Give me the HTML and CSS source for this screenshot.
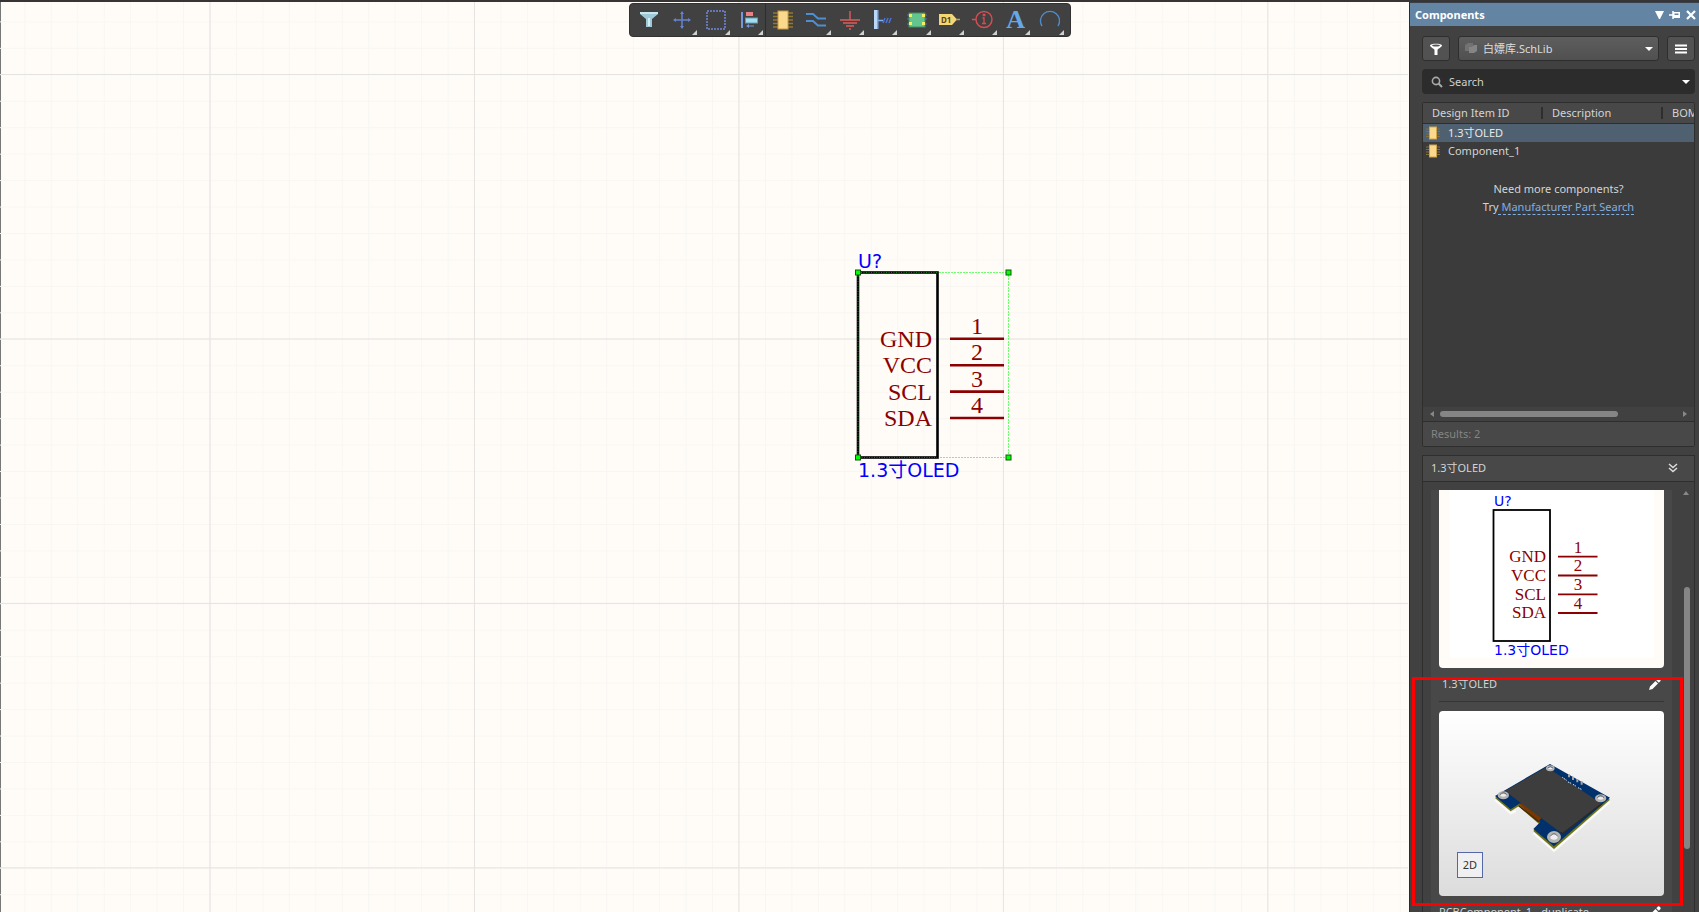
FILE: index.html
```html
<!DOCTYPE html>
<html lang="zh-CN">
<head>
  <meta charset="UTF-8">
  <meta name="viewport" content="width=device-width, initial-scale=1.0">
  <title>Components</title>
  <link rel="stylesheet" href="styles.css">
</head>
<body>
  <main class="canvas">
    <svg class="sheet">
      <defs>
        <pattern id="minor" x="209.5" y="74.3" width="26.45" height="26.45" patternUnits="userSpaceOnUse">
          <path d="M.5 0V26.45M0 .5H26.45" stroke="#f8f6f3" fill="none"/>
        </pattern>
        <pattern id="major" x="209.5" y="74" width="264.45" height="264.45" patternUnits="userSpaceOnUse">
          <path d="M.5 0V264.45M0 .5H264.45" stroke="#e3e3e1" fill="none"/>
        </pattern>
      </defs>
      <rect width="100%" height="100%" fill="url(#minor)"/>
      <rect width="100%" height="100%" fill="url(#major)"/>

      <g class="symbol">
        <text class="designator" x="858" y="268">U?</text>
        <rect x="858" y="272.5" width="79.5" height="185" fill="none" stroke="#000" stroke-width="2.6"/>
        <path d="M937 272.5H858V457.5H937" fill="none" stroke="#1c7a1c" stroke-dasharray="1 1.5"/>
        <path d="M939 272.5H1008.5V457.5H939" fill="none" stroke="#6cff6c" stroke-dasharray="2 1"/>
        <g class="pin-name">
          <text x="932" y="347">GND</text>
          <text x="932" y="373">VCC</text>
          <text x="932" y="400">SCL</text>
          <text x="932" y="426">SDA</text>
        </g>
        <g class="pin-number">
          <text x="977" y="334">1</text>
          <text x="977" y="360">2</text>
          <text x="977" y="387">3</text>
          <text x="977" y="413">4</text>
        </g>
        <path d="M950 338.7H1004M950 365.2H1004M950 391.6H1004M950 418H1004" stroke="#8b0000" stroke-width="2.6"/>
        <text class="designator" x="858" y="477">1.3寸OLED</text>
        <g fill="#0f0" stroke="#0a5a0a">
          <rect x="855.5" y="270" width="5" height="5"/>
          <rect x="1006" y="270" width="5" height="5"/>
          <rect x="855.5" y="455" width="5" height="5"/>
          <rect x="1006" y="455" width="5" height="5"/>
        </g>
      </g>
    </svg>
  </main>

  <nav class="toolbar" aria-label="Active Bar">
    <button aria-label="Filter"><svg viewBox="0 0 22 22"><path d="M2 3H20V5L14 10V18H8V10L2 5Z" fill="#9fc9d8"/><path d="M2 3H20V5H2Z" fill="#c9e6ee"/><path d="M10 9H12V17H10Z" fill="#d4eef5"/></svg></button>
    <button class="more" aria-label="Move"><svg viewBox="0 0 22 22"><path d="M11 3V19M3 11H19" stroke="#6482cf" stroke-width="1.5"/><path d="M11 2L13 5H9ZM11 20L13 17H9ZM2 11L5 9V13ZM20 11L17 9V13Z" fill="#6482cf"/></svg></button>
    <button class="more" aria-label="Select"><svg viewBox="0 0 22 22"><rect x="2" y="2" width="18" height="18" fill="none" stroke="#7088dc" stroke-width="1.5" stroke-dasharray="2 1"/></svg></button>
    <button class="more" aria-label="Align"><svg viewBox="0 0 22 22"><path d="M3 3H5V19H3Z" fill="#7397dc"/><rect x="8" y="3" width="7" height="4" fill="#e98086"/><rect x="7.500" y="9" width="12" height="5" fill="#a7dcec" stroke="#5d9eba"/><path d="M8 17L11 15V16.500H16V17.500H11V19Z" fill="#7397dc"/></svg></button>
    <button class="group" aria-label="Place part"><svg viewBox="0 0 22 22"><path d="M1 4H21M1 7.500H21M1 11H21M1 14.500H21M1 18H21" stroke="#93782c" stroke-width="1.4"/><rect x="6" y="2" width="10" height="18" fill="#fbd98c" stroke="#c89d45"/></svg></button>
    <button class="more" aria-label="Place wire"><svg viewBox="0 0 22 22"><path d="M1 5H8L13 9.500H21M1 12H8L13 16.500H21" fill="none" stroke="#4d8fd0" stroke-width="2"/></svg></button>
    <button class="more" aria-label="Place ground"><svg viewBox="0 0 22 22"><path d="M11 2V11M1 11H21M4 14H18M7 17H15M10 20H12" stroke="#de5b5b" stroke-width="1.4"/></svg></button>
    <button class="more" aria-label="Place harness"><svg viewBox="0 0 22 22"><rect x="2" y="1" width="4" height="19" fill="#b9d6fb"/><path d="M5 1H6.500V20H5Z" fill="#7da6e6"/><path d="M6 11.500H11" stroke="#80aeea" stroke-width="1.500"/><path d="M11 14L13 9M14 14L16 9M17 14L19 9" stroke="#4e72d8" stroke-width="1.500"/></svg></button>
    <button class="more" aria-label="Place sheet symbol"><svg viewBox="0 0 22 22"><path d="M2 6H22M2 10H22M2 15H22" stroke="#5d70bd"/><rect x="4" y="4" width="16" height="14" fill="#63c48d" stroke="#438e68"/><path d="M4 5H7V8H4ZM17 5H20V8H17ZM4 13H7V16H4ZM17 13H20V16H17Z" fill="#f3ef65"/></svg></button>
    <button class="more" aria-label="Place port"><svg viewBox="0 0 22 22"><path d="M1 5H14L19 10.500L14 16H1Z" fill="#f5d675"/><path d="M18 10.500H22" stroke="#c39c46" stroke-width="1.500"/><text class="port-name" x="3" y="14">D1</text></svg></button>
    <button class="more" aria-label="Place directive"><svg viewBox="0 0 22 22"><circle cx="13" cy="10.500" r="8" fill="none" stroke="#d84d52" stroke-width="1.400"/><path d="M1 10.500H5M11.500 9H13V14.500M11 14.500H15M12.300 5.500H13.800V6.500H12.300Z" fill="none" stroke="#d84d52" stroke-width="1.300"/></svg></button>
    <button class="more letter" aria-label="Place text">A</button>
    <button class="more" aria-label="Place arc"><svg viewBox="0 0 22 22"><path d="M4 17A9.500 9.500 0 1 1 20 17" fill="none" stroke="#5289c7" stroke-width="1.400"/></svg></button>
  </nav>

  <aside class="panel">
    <header class="title">
      <h1>Components</h1>
      <button aria-label="Panel menu"><svg viewBox="0 0 14 14"><path d="M3 3H12L8 11H7Z" fill="#fff"/></svg></button>
      <button aria-label="Pin panel"><svg viewBox="0 0 14 14"><path d="M1 7H5M5 3V11" stroke="#fff" stroke-width="1.500"/><path d="M5 4H12V10H5ZM6.500 5.500V7H10.500V5.500Z" fill="#fff" fill-rule="evenodd"/></svg></button>
      <button aria-label="Close panel"><svg viewBox="0 0 14 14"><path d="M3 3L11 11M11 3L3 11" stroke="#fff" stroke-width="2.200"/></svg></button>
    </header>

    <div class="content">
      <div class="library">
        <button class="square" aria-label="Filters"><svg viewBox="0 0 14 14"><path d="M1 3.500C1 1 13 1 13 3.500C13 5 8.500 7 8.500 8V13H5.500V8C5.500 7 1 5 1 3.500Z" fill="#fff"/><ellipse cx="7" cy="3.600" rx="3.800" ry="1" fill="#555"/></svg></button>
        <div class="picker">
          <svg class="book" viewBox="0 0 14 12"><path d="M1 3L4 1H9V7L7 9H1Z" fill="#727272"/><path d="M5 5H8L10 3H13V9L10 11H5Z" fill="#858585"/></svg>
          <select aria-label="Library"><option>白嫖库.SchLib</option></select>
          <i class="caret"></i>
        </div>
        <button class="square" aria-label="Operations"><svg viewBox="0 0 14 14"><path d="M1 3.500H13M1 7H13M1 10.500H13" stroke="#fff" stroke-width="2"/></svg></button>
      </div>

      <div class="search">
        <svg class="lens" viewBox="0 0 12 12"><circle cx="5" cy="5" r="3.600" fill="none" stroke="#a9a9a9" stroke-width="1.600"/><path d="M7.500 7.500L11 11" stroke="#a9a9a9" stroke-width="2"/></svg>
        <input type="text" placeholder="Search" aria-label="Search">
        <i class="caret"></i>
      </div>

      <section class="results">
        <div class="list">
          <table>
            <thead>
              <tr><th>Design Item ID</th><th>Description</th><th>BOM</th></tr>
            </thead>
            <tbody>
              <tr class="selected"><td><svg class="chip" viewBox="0 0 14 14"><path d="M0 3H14M0 5.500H14M0 8H14M0 10.500H14" stroke="#85713a"/><rect x="3.500" y="1" width="7" height="12" fill="#fbd98c" stroke="#cfa44e"/></svg>1.3寸OLED</td><td></td><td></td></tr>
              <tr><td><svg class="chip" viewBox="0 0 14 14"><path d="M0 3H14M0 5.500H14M0 8H14M0 10.500H14" stroke="#85713a"/><rect x="3.500" y="1" width="7" height="12" fill="#fbd98c" stroke="#cfa44e"/></svg>Component_1</td><td></td><td></td></tr>
            </tbody>
          </table>
          <p class="hint">Need more components?<br>Try<a href="#">&nbsp;Manufacturer Part Search</a></p>
        </div>
        <div class="hscroll">
          <svg viewBox="0 0 6 8"><path d="M5 1V7L1 4Z" fill="#888"/></svg>
          <div class="track"><div class="thumb"></div></div>
          <svg viewBox="0 0 6 8"><path d="M1 1V7L5 4Z" fill="#888"/></svg>
        </div>
        <footer>Results: 2</footer>
      </section>

      <section class="details">
        <header>
          <h2>1.3寸OLED</h2>
          <button aria-label="Collapse"><svg viewBox="0 0 10 10"><path d="M1 1L5 4.500L9 1M1 5L5 8.500L9 5" fill="none" stroke="#ddd" stroke-width="1.500"/></svg></button>
        </header>
        <div class="scroller">
          <div class="models">
            <div class="preview schematic">
              <svg viewBox="0 0 225 178">
                <rect x="10" width="205" height="168" fill="#fff"/>
                <text class="designator" x="55" y="16">U?</text>
                <rect x="54.500" y="20" width="56.500" height="131" fill="none" stroke="#000" stroke-width="1.800"/>
                <g class="pin-name">
                  <text x="107" y="72">GND</text>
                  <text x="107" y="91">VCC</text>
                  <text x="107" y="110">SCL</text>
                  <text x="107" y="128">SDA</text>
                </g>
                <g class="pin-number">
                  <text x="139" y="63">1</text>
                  <text x="139" y="81">2</text>
                  <text x="139" y="100">3</text>
                  <text x="139" y="119">4</text>
                </g>
                <path d="M119 66.700H158.500M119 85.500H158.500M119 104.300H158.500M119 123H158.500" stroke="#8b0000" stroke-width="1.800"/>
                <text class="designator" x="55" y="165">1.3寸OLED</text>
              </svg>
            </div>
            <div class="model-name">
              <span>1.3寸OLED</span>
              <button aria-label="Edit symbol"><svg viewBox="0 0 12 12"><path d="M0 12L1 8.500L6.500 3L9 5.500L3.500 11ZM7.300 2.200L9 .5Q10 0 11 1Q12 2 11.500 3L9.800 4.700Z" fill="#fff"/></svg></button>
            </div>
            <div class="preview footprint">
              <svg viewBox="0 0 225 185">
                <g transform="translate(41 40) scale(.3333)">
                  <path d="M45 146L92 187L108 180M160 246L222 300L390 152" fill="none" stroke="#fafafa" stroke-width="6"/>
                  <path d="M210 44L390 146L222 294L160 240L178 220L116 166L92 181L45 141Z" fill="#6f7216"/>
                  <path d="M210 39L390 140L222 286L160 234L180 214L118 158L92 175L45 135Z" fill="#00316c"/>
                  <path d="M116 158L128 155L184 200L176 212Z" fill="#793800"/>
                  <path d="M116 164L176 212" stroke="#4d2400" stroke-width="4"/>
                  <path d="M200 48L365 158L247 248L75 120Z" fill="#3d3d3d"/>
                  <path d="M365 158L247 248L242 243" fill="none" stroke="#292929" stroke-width="4"/>
                  <path d="M247 79L260 88M264 93L274 97M279 100L289 106M294 110L306 116" stroke="#dde4ee" stroke-width="3" stroke-dasharray="4 2"/>
                  <path d="M267 70V79M279 77V87M292 84V94M305 91V101" stroke="#a5a5a5" stroke-width="6"/>
                  <g fill="#eee" stroke="#b4b4b4">
                    <ellipse cx="211" cy="52" rx="10" ry="6" stroke-width="6"/>
                    <ellipse cx="70" cy="133" rx="13" ry="8" stroke-width="8"/>
                    <ellipse cx="362" cy="142" rx="13" ry="8" stroke-width="8"/>
                    <ellipse cx="222" cy="258" rx="16" ry="13" stroke-width="10"/>
                  </g>
                  <g fill="none" stroke="#666" stroke-width="3">
                    <path d="M203 51Q211 43 219 51"/>
                    <path d="M60 131Q70 119 80 131"/>
                    <path d="M352 140Q362 128 372 140"/>
                    <path d="M211 256Q222 240 233 256"/>
                  </g>
                </g>
              </svg>
              <button class="mode">2D</button>
            </div>
            <div class="model-name last">
              <span>PCBComponent_1 - duplicate</span>
              <button aria-label="Edit footprint"><svg viewBox="0 0 12 12"><path d="M0 12L1 8.500L6.500 3L9 5.500L3.500 11ZM7.300 2.200L9 .5Q10 0 11 1Q12 2 11.500 3L9.800 4.700Z" fill="#fff"/></svg></button>
            </div>
          </div>
          <div class="vscroll">
            <svg viewBox="0 0 8 6"><path d="M1 5H7L4 1Z" fill="#888"/></svg>
            <div class="thumb"></div>
          </div>
          <div class="highlight"></div>
        </div>
      </section>
    </div>
  </aside>
</body>
</html>
```

FILE: styles.css
```css
* {
  box-sizing: border-box;
}
body {
  margin: 0;
  height: 100vh;
  display: flex;
  position: relative;
  overflow: hidden;
  border-top: 2px solid #373435;
  background: #414141;
  color: #d4d4d4;
  font-family: "Noto Sans", "Noto Sans CJK SC", sans-serif;
  font-size: 11px;
  line-height: 18px;
}
button {
  padding: 0;
  border: none;
  background: none;
  color: inherit;
  font: inherit;
  cursor: pointer;
}
svg {
  display: block;
}

/* drawing sheet */
.canvas {
  flex: 1;
  min-width: 0;
  margin-top: -2px;
  border-left: 1px solid #777;
  background: #fffcf8;
}
.sheet {
  width: 100%;
  height: 100%;
  margin-left: -1px;
}
.designator {
  fill: #00f;
  font-family: "DejaVu Sans", "Noto Sans CJK SC", sans-serif;
  font-size: 19px;
}
.pin-name,
.pin-number {
  fill: #8b0000;
  font-family: "Liberation Serif", serif;
  font-size: 24px;
}
.pin-name {
  text-anchor: end;
}
.pin-number {
  text-anchor: middle;
}

/* active bar */
.toolbar {
  position: absolute;
  top: 1px;
  left: 50%;
  width: 442px;
  height: 34px;
  transform: translateX(-50%);
  display: flex;
  padding: 0 4px 0 3px;
  border: 1px solid #323232;
  border-radius: 4px;
  background: #414141;
}
.toolbar button {
  flex: 1;
  position: relative;
  display: flex;
  justify-content: center;
  align-items: center;
}
.toolbar svg {
  width: 22px;
  height: 22px;
}
.toolbar .more::after {
  content: "";
  position: absolute;
  right: 2px;
  bottom: 1px;
  border-left: 5px solid transparent;
  border-bottom: 5px solid #d0d0d0;
}
.toolbar .group {
  border-left: 1px solid #2d2d2d;
}
.port-name {
  fill: #5b4412;
  font: bold 8px "Noto Sans", sans-serif;
}
.toolbar .letter {
  color: #64a8e8;
  font: bold 26px "Liberation Serif", serif;
}

/* components panel */
.panel {
  width: 290px;
  display: flex;
  flex-direction: column;
  border-left: 1px solid #2b2b2b;
  background: #414141;
}
.title {
  display: flex;
  align-items: center;
  height: 24px;
  padding-left: 5px;
  border-top: 1px solid #37404a;
  background: #6384a3;
}
.title h1 {
  flex: 1;
  margin: 0;
  color: #fff;
  font-size: 11px;
}
.title button {
  width: 16px;
}
.title svg {
  width: 14px;
  margin: 0 auto;
}
.content {
  flex: 1;
  min-height: 0;
  display: flex;
  flex-direction: column;
  padding: 10px 4px 0 12px;
}
.library {
  display: flex;
  gap: 8px;
  margin-bottom: 8px;
}
.square {
  width: 28px;
  height: 25px;
  border: 1px solid #2e2e2e;
  border-radius: 3px;
  background: #525252;
}
.square svg {
  width: 14px;
  margin: 0 auto;
}
.picker {
  flex: 1;
  position: relative;
}
.picker select {
  width: 100%;
  height: 25px;
  padding: 0 22px 0 24px;
  appearance: none;
  border: 1px solid #2e2e2e;
  border-radius: 3px;
  background: linear-gradient(#5e5e5e, #505050);
  color: #ddd;
  font: inherit;
}
.book {
  position: absolute;
  top: 6px;
  left: 6px;
  width: 14px;
}
.caret {
  border: 4px solid transparent;
  border-top-color: #fff;
  border-bottom: none;
}
.picker .caret {
  position: absolute;
  top: 11px;
  right: 6px;
}
.search {
  display: flex;
  align-items: center;
  gap: 6px;
  height: 25px;
  margin-bottom: 8px;
  padding: 0 5px 0 9px;
  border-radius: 4px;
  background: #2c2c2c;
}
.lens {
  width: 12px;
}
.search input {
  flex: 1;
  min-width: 0;
  padding: 0;
  border: none;
  outline: none;
  background: none;
  color: #d4d4d4;
  font: inherit;
}
.search input::placeholder {
  color: #d0d0d0;
}

.results {
  flex: 344;
  min-height: 0;
  display: flex;
  flex-direction: column;
  margin-bottom: 8px;
  border: 1px solid #2e2e2e;
  border-radius: 2px;
}
.list {
  flex: 1;
  overflow: hidden;
  background: #3b3b3b;
}
table {
  width: 320px;
  table-layout: fixed;
  border-collapse: collapse;
}
th {
  position: relative;
  height: 20px;
  padding: 1px 9px 0;
  border-bottom: 1px solid #2e2e2e;
  background: #484848;
  font-weight: normal;
  text-align: left;
}
th:nth-child(-n+2) {
  width: 120px;
}
th:not(:last-child)::after {
  content: "";
  position: absolute;
  top: 4px;
  right: 0;
  width: 2px;
  height: 12px;
  background: #2e2e2e;
}
td {
  height: 18px;
  padding: 0 3px;
  line-height: 18px;
  white-space: nowrap;
}
.selected td {
  background: #4f6070;
  color: #e8e8e8;
}
.chip {
  display: inline-block;
  width: 14px;
  margin-right: 8px;
  vertical-align: -3px;
}
.hint {
  margin: 20px 0 0;
  text-align: center;
}
a {
  color: #82aee2;
  text-decoration: underline dashed 1px;
  text-underline-offset: 3px;
}
.hscroll {
  display: flex;
  align-items: center;
  gap: 5px;
  height: 14px;
  padding: 0 6px;
  background: #414141;
}
.hscroll svg {
  width: 6px;
}
.track {
  flex: 1;
}
.thumb {
  border-radius: 3px;
  background: #858585;
}
.hscroll .thumb {
  width: 75%;
  height: 6px;
}
.results footer {
  padding: 3px 8px;
  border-top: 1px solid #2e2e2e;
  background: #484848;
  color: #858585;
}

.details {
  flex: 458;
  min-height: 0;
  display: flex;
  flex-direction: column;
  border: 1px solid #2e2e2e;
  border-bottom: none;
}
.details header {
  display: flex;
  align-items: center;
  justify-content: space-between;
  height: 26px;
  padding: 0 16px 0 8px;
  border-bottom: 1px solid #2e2e2e;
  background: #484848;
}
.details h2 {
  margin: 0;
  font-size: 11px;
  font-weight: normal;
}
.details header svg {
  width: 10px;
}
.scroller {
  flex: 1;
  min-height: 0;
  position: relative;
  display: flex;
  padding: 8px 4px 0 8px;
}
.models {
  flex: 1;
  overflow: hidden;
  padding: 0 8px;
  background: #484848;
}
.preview {
  position: relative;
}
.schematic {
  border-radius: 0 0 4px 4px;
  background: #fffcf8;
}
.schematic .designator {
  font-size: 14px;
}
.schematic .pin-name,
.schematic .pin-number {
  font-size: 17px;
}
.footprint {
  border-radius: 4px;
  background: linear-gradient(#fff, #dcdcdc);
}
.mode {
  position: absolute;
  bottom: 18px;
  left: 18px;
  width: 26px;
  height: 26px;
  border: 1px solid #5468a8;
  background: #f0f0f2;
  color: #333;
}
.model-name {
  display: flex;
  align-items: center;
  justify-content: space-between;
  height: 34px;
  margin-bottom: 9px;
  padding: 0 3px;
  border-bottom: 1px solid #353535;
}
.model-name svg {
  width: 12px;
}
.last {
  padding-left: 0;
}
.vscroll {
  width: 18px;
  display: flex;
  flex-direction: column;
  align-items: flex-end;
}
.vscroll svg {
  width: 8px;
}
.vscroll .thumb {
  width: 6px;
  height: 62%;
  margin-top: 91px;
}

/* marked area */
.highlight {
  position: absolute;
  inset: 195px 11px 6px -11px;
  border: 3px solid #f00;
}
```
